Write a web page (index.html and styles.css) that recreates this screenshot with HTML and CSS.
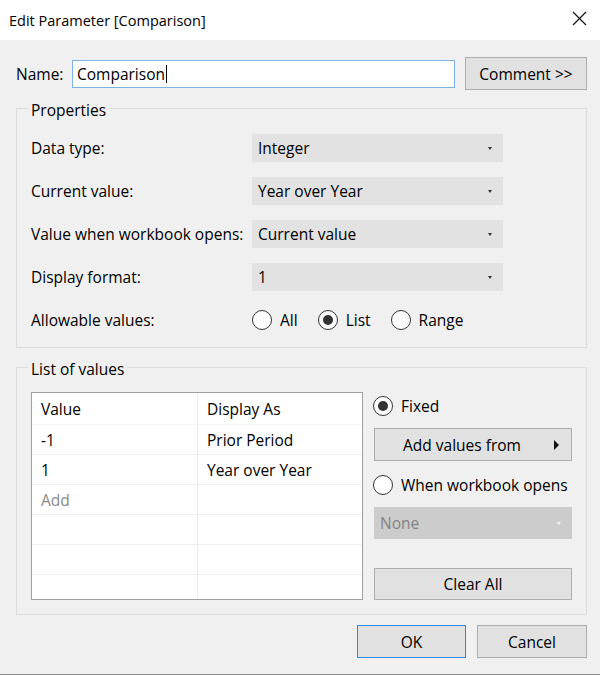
FILE: index.html
```html
<!DOCTYPE html>
<html>
<head>
<meta charset="utf-8">
<title>Edit Parameter</title>
<link rel="stylesheet" href="styles.css">
</head>
<body>
<div class="window">
  <div class="titlebar">
    <span class="title">Edit Parameter [Comparison]</span>
    <svg class="close" viewBox="0 0 15 15" width="15" height="15"><path d="M1 1L14 14M14 1L1 14" stroke="#111" stroke-width="1.2" fill="none"/></svg>
  </div>
  <div class="content">
    <div class="name-row">
      <span class="name-label">Name:</span>
      <div class="name-input">Comparison<span class="caret"></span></div>
      <button class="btn comment">Comment &gt;&gt;</button>
    </div>

    <fieldset class="group props">
      <legend>Properties</legend>
      <div class="props-grid">
        <div class="lbl">Data type:</div>
        <div class="dd"><span>Integer</span><i class="arrow"></i></div>
        <div class="lbl">Current value:</div>
        <div class="dd"><span>Year over Year</span><i class="arrow"></i></div>
        <div class="lbl">Value when workbook opens:</div>
        <div class="dd"><span>Current value</span><i class="arrow"></i></div>
        <div class="lbl">Display format:</div>
        <div class="dd"><span>1</span><i class="arrow"></i></div>
        <div class="lbl">Allowable values:</div>
        <div class="radios">
          <span class="radio"><span class="dot"></span>All</span>
          <span class="radio"><span class="dot on"></span>List</span>
          <span class="radio"><span class="dot"></span>Range</span>
        </div>
      </div>
    </fieldset>

    <fieldset class="group list">
      <legend>List of values</legend>
      <div class="list-body">
        <div class="table">
          <div class="cell c1 head">Value</div><div class="cell c2 head">Display As</div>
          <div class="cell c1">-1</div><div class="cell c2">Prior Period</div>
          <div class="cell c1">1</div><div class="cell c2">Year over Year</div>
          <div class="cell c1 muted">Add</div><div class="cell c2"></div>
          <div class="cell c1"></div><div class="cell c2"></div>
          <div class="cell c1"></div><div class="cell c2"></div>
          <div class="cell c1 last"></div><div class="cell c2 last"></div>
        </div>
        <div class="side">
          <span class="radio side-radio"><span class="dot on"></span>Fixed</span>
          <button class="btn addbtn"><span>Add values from</span><i class="tri"></i></button>
          <span class="radio side-radio when"><span class="dot"></span>When workbook opens</span>
          <div class="dd disabled"><span>None</span><i class="arrow"></i></div>
          <button class="btn clear">Clear All</button>
        </div>
      </div>
    </fieldset>

    <div class="footer">
      <button class="btn ok">OK</button>
      <button class="btn cancel">Cancel</button>
    </div>
  </div>
</div>
</body>
</html>
```

FILE: styles.css
```css
html, body {
  margin: 0;
  padding: 0;
}
body {
  background: #f0f0f0;
  font-family: "Open Sans", "Noto Sans", sans-serif;
  font-size: 15.5px;
  color: #000;
}
.window {
  width: 600px;
  height: 675px;
  box-sizing: border-box;
  border-bottom: 1px solid #8a8a8a;
  display: flex;
  flex-direction: column;
}
.titlebar {
  height: 40px;
  flex: none;
  background: #fff;
  display: flex;
  align-items: center;
  justify-content: space-between;
  padding: 0 13px 0 9px;
}
.title {
  font-size: 14.5px;
}
.close {
  display: block;
  margin-top: -3px;
}
.content {
  padding: 17px 13px 0 16px;
}

/* name row */
.name-row {
  display: flex;
  align-items: center;
  height: 33px;
}
.name-label {
  width: 56px;
}
.name-input {
  width: 383px;
  height: 28px;
  box-sizing: border-box;
  border: 1px solid #7db1e6;
  background: #fff;
  display: flex;
  align-items: center;
  padding-left: 4px;
}
.caret {
  width: 1px;
  height: 18px;
  background: #000;
  margin-left: 1px;
}
.btn {
  font: inherit;
  color: #000;
  background: #e1e1e1;
  border: 1px solid #adadad;
  padding: 0;
  margin: 0;
  box-sizing: border-box;
}
.comment {
  margin-left: 10px;
  width: 122px;
  height: 33px;
}

/* group boxes */
.group {
  margin: 6px 0 0;
  border: 1px solid #dcdcdc;
  padding: 0 14px 13px;
  min-width: 0;
}
.group legend {
  padding: 4px 3px 0;
  margin-left: -3px;
  line-height: 20px;
}
.props-grid {
  display: grid;
  grid-template-columns: 221px 251px;
  grid-auto-rows: 28px;
  row-gap: 15px;
  align-items: center;
  margin-top: 14px;
}
.dd {
  height: 28px;
  box-sizing: border-box;
  background: #e2e2e2;
  display: flex;
  align-items: center;
  justify-content: space-between;
  padding: 0 11px 0 6px;
}
.arrow {
  width: 0;
  height: 0;
  border-left: 2.5px solid transparent;
  border-right: 2.5px solid transparent;
  border-top: 3px solid #333;
}
.radios {
  display: flex;
  align-items: center;
  gap: 20px;
}
.radio {
  display: flex;
  align-items: center;
  gap: 8px;
}
.dot {
  width: 20px;
  height: 20px;
  box-sizing: border-box;
  border: 1.5px solid #333;
  border-radius: 50%;
  background: #fff;
  display: flex;
  align-items: center;
  justify-content: center;
}
.dot.on::after {
  content: "";
  width: 10px;
  height: 10px;
  border-radius: 50%;
  background: #333;
}

/* list of values */
.group.list {
  margin-top: 7px;
  padding-bottom: 14px;
}
.list-body {
  display: flex;
  gap: 11px;
  margin-top: 13px;
}
.table {
  width: 332px;
  height: 208px;
  box-sizing: border-box;
  border: 1px solid #a0a0a0;
  background: #fff;
  display: grid;
  grid-template-columns: 166px 1fr;
  grid-template-rows: 32px repeat(5, 30px) 1fr;
}
.cell {
  display: flex;
  align-items: center;
  padding-left: 9px;
  border-bottom: 1px solid #f0f0f0;
  box-sizing: border-box;
}
.cell.head {
  border-bottom-color: #f6f6f6;
}
.cell.c1 {
  border-right: 1px solid #ebebeb;
}
.cell.last {
  border-bottom: none;
}
.cell.muted {
  color: #8a8a8a;
}
.side {
  width: 198px;
  display: flex;
  flex-direction: column;
}
.side-radio {
  height: 28px;
  margin-left: -1px;
}
.addbtn {
  margin-top: 8px;
  height: 33px;
  display: flex;
  align-items: center;
  justify-content: space-between;
  padding: 0 12px 0 28px;
}
.tri {
  width: 0;
  height: 0;
  border-left: 5px solid #111;
  border-top: 5px solid transparent;
  border-bottom: 5px solid transparent;
}
.side-radio.when {
  margin-top: 10px;
}
.dd.disabled {
  margin-top: 8px;
  height: 32px;
  background: #cccccc;
  color: #838383;
}
.dd.disabled .arrow {
  border-top-color: #f4f4f4;
}
.clear {
  margin-top: auto;
  height: 32px;
}

/* footer */
.footer {
  display: flex;
  justify-content: flex-end;
  gap: 11px;
  margin-top: 10px;
}
.ok {
  width: 109px;
  height: 33px;
  border-color: #2f87de;
}
.cancel {
  width: 110px;
  height: 33px;
}
```
